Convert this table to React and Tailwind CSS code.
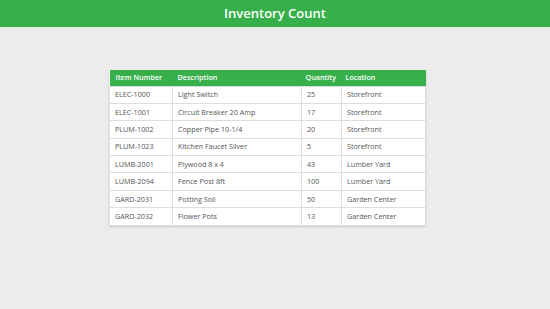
import React from "react";

const items = [
  { id: "ELEC-1000", desc: "Light Switch", qty: 25, loc: "Storefront" },
  { id: "ELEC-1001", desc: "Circuit Breaker 20 Amp", qty: 17, loc: "Storefront" },
  { id: "PLUM-1002", desc: "Copper Pipe 10-1/4", qty: 20, loc: "Storefront" },
  { id: "PLUM-1023", desc: "Kitchen Faucet Silver", qty: 5, loc: "Storefront" },
  { id: "LUMB-2001", desc: "Plywood 8 x 4", qty: 43, loc: "Lumber Yard" },
  { id: "LUMB-2094", desc: "Fence Post 8ft", qty: 100, loc: "Lumber Yard" },
  { id: "GARD-2031", desc: "Potting Soil", qty: 50, loc: "Garden Center" },
  { id: "GARD-2032", desc: "Flower Pots", qty: 13, loc: "Garden Center" },
];

const App = () => {
  return (
    <div
      className="w-[550px] h-[309px] bg-[#ececec] overflow-hidden"
      style={{ fontFamily: '"Open Sans", sans-serif' }}
    >
      <div className="h-[27px] bg-[#37b04b] flex items-center justify-center">
        <h1 className="text-white text-[13px] font-semibold leading-none">
          Inventory Count
        </h1>
      </div>
      <div className="flex pt-[43px] pl-[109px]">
        <table className="border-collapse bg-white shadow-[0_1px_2px_rgba(0,0,0,0.15)] text-[7.2px] text-[#555]">
          <thead>
            <tr className="bg-[#37b04b] text-white h-[16px]">
              <th className="w-[63px] text-left font-semibold pl-[6px]">Item Number</th>
              <th className="w-[129px] text-left font-semibold pl-[5px]">Description</th>
              <th className="w-[40px] text-left font-semibold pl-[4px]">Quantity</th>
              <th className="w-[84px] text-left font-semibold pl-[4px]">Location</th>
            </tr>
          </thead>
          <tbody>
            {items.map((item) => (
              <tr key={item.id} className="h-[17.4px]">
                <td className="border border-[#dddddd] pl-[5px]">{item.id}</td>
                <td className="border border-[#dddddd] pl-[5px]">{item.desc}</td>
                <td className="border border-[#dddddd] pl-[5px]">{item.qty}</td>
                <td className="border border-[#dddddd] pl-[5px]">{item.loc}</td>
              </tr>
            ))}
          </tbody>
        </table>
      </div>
    </div>
  );
};

export default App;
